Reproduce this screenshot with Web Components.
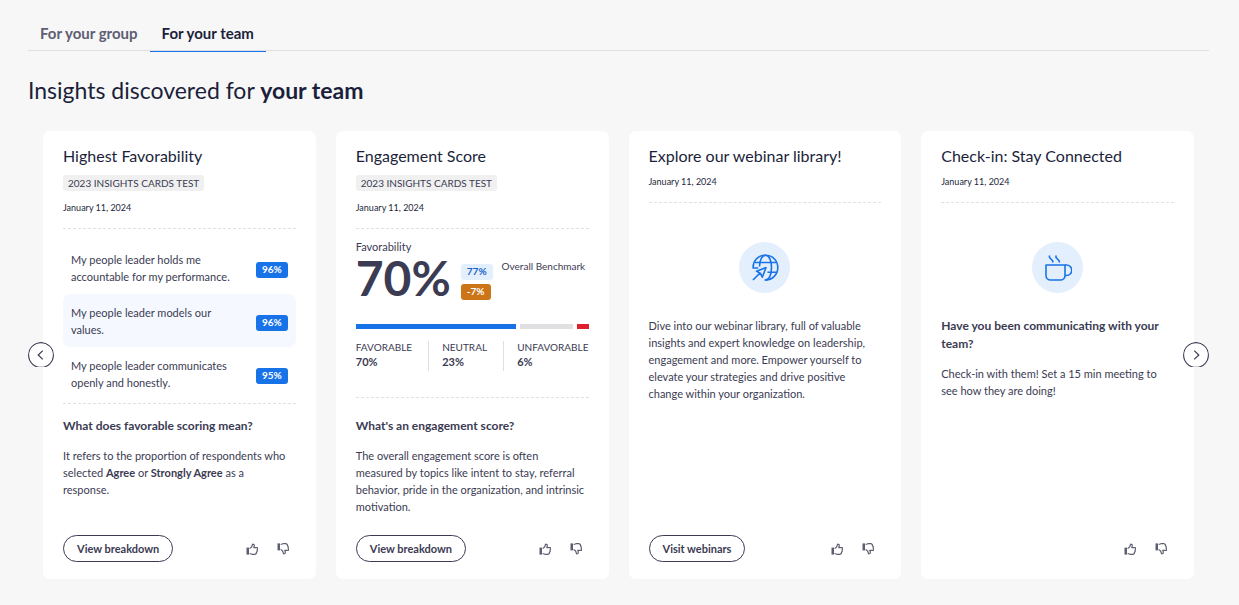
<!DOCTYPE html>
<html lang="en">
<head>
  <meta charset="utf-8">
  <meta name="viewport" content="width=device-width, initial-scale=1">
  <title>Insights</title>
  <style>
    :root {
      --ink: #1c1f3b;
      --text: #3b3b53;
      --muted: #5e5e72;
      --blue: #1973e8;
      --blue-soft: #e3effc;
      --line: #e0e0e3;
    }
    body {
      margin: 0;
      padding: 19px 30px 25px 28px;
      background: #f7f7f7;
      color: var(--text);
      font: 11px/17px Lato, "Open Sans", sans-serif;
    }
    h1 {
      margin: 24px 0 26px;
      color: var(--ink);
      font-size: 23px;
      font-weight: 400;
      line-height: 30px;
    }
  </style>
</head>
<body>
  <insight-tabs></insight-tabs>
  <h1>Insights discovered for <strong>your team</strong></h1>

  <insight-carousel>
    <insight-card heading="Highest Favorability" tag="2023 INSIGHTS CARDS TEST" date="January 11, 2024" action="View breakdown">
      <score-list>
        <score-row score="96%">My people leader holds me accountable for my performance.</score-row>
        <score-row score="96%" active>My people leader models our values.</score-row>
        <score-row score="95%">My people leader communicates openly and honestly.</score-row>
      </score-list>
      <info-text heading="What does favorable scoring mean?">
        It refers to the proportion of respondents who selected <strong>Agree</strong> or <strong>Strongly Agree</strong> as a response.
      </info-text>
    </insight-card>

    <insight-card heading="Engagement Score" tag="2023 INSIGHTS CARDS TEST" date="January 11, 2024" action="View breakdown">
      <engagement-score></engagement-score>
      <info-text heading="What's an engagement score?">
        The overall engagement score is often measured by topics like intent to stay, referral behavior, pride in the organization, and intrinsic motivation.
      </info-text>
    </insight-card>

    <insight-card heading="Explore our webinar library!" date="January 11, 2024" action="Visit webinars">
      <round-icon name="globe"></round-icon>
      <info-text>
        Dive into our webinar library, full of valuable insights and expert knowledge on leadership, engagement and more. Empower yourself to elevate your strategies and drive positive change within your organization.
      </info-text>
    </insight-card>

    <insight-card heading="Check-in: Stay Connected" date="January 11, 2024">
      <round-icon name="cup"></round-icon>
      <info-text heading="Have you been communicating with your team?">
        Check-in with them! Set a 15 min meeting to see how they are doing!
      </info-text>
    </insight-card>
  </insight-carousel>

  <script>
    class InsightTabs extends HTMLElement {
      constructor() {
        super();
        this.attachShadow({ mode: 'open' });
      }

      connectedCallback() {
        this.shadowRoot.innerHTML = `
          <style>
            :host { display: block; }
            div {
              display: flex;
              border-bottom: 1px solid var(--line);
            }
            button {
              margin: 0 0 -2px;
              padding: 0 12px 4px;
              height: 33px;
              border: 0;
              border-bottom: 1px solid transparent;
              background: none;
              color: var(--muted);
              font: inherit;
              font-size: 15px;
              font-weight: 700;
              cursor: pointer;
            }
            button[aria-selected="true"] {
              border-color: var(--blue);
              color: var(--ink);
            }
          </style>
          <div role="tablist">
            <button role="tab" aria-selected="false">For your group</button>
            <button role="tab" aria-selected="true">For your team</button>
          </div>
        `;
        const tabs = this.shadowRoot.querySelectorAll('button');
        tabs.forEach((tab) => {
          tab.addEventListener('click', () => {
            tabs.forEach((t) => t.setAttribute('aria-selected', t === tab));
          });
        });
      }
    }

    class InsightCarousel extends HTMLElement {
      constructor() {
        super();
        this.attachShadow({ mode: 'open' });
        this.shadowRoot.innerHTML = `
          <style>
            :host {
              display: block;
              position: relative;
            }
            .cards {
              display: grid;
              grid-template-columns: repeat(4, minmax(0, 1fr));
              gap: 20px;
              margin: 0 15px;
            }
            /* arrows lie over the outer edges of the first and last card */
            button {
              position: absolute;
              top: 50%;
              width: 26px;
              height: 25px;
              margin-top: -13px;
              padding: 0;
              border: 0;
              border-radius: 13px 13px 0 0;
              background: none;
              overflow: hidden;
              cursor: pointer;
            }
            .prev { left: 0; }
            .next { right: 0; }
            svg { display: block; }
          </style>
          <div class="cards"><slot></slot></div>
          <button class="prev" aria-label="Previous">
            <svg width="26" height="26" viewBox="0 0 26 26" fill="#fff" stroke="#3b3b53">
              <circle cx="13" cy="13" r="12.4" stroke-width="1.1"/>
              <path d="M14.800 8.600 10.200 13l4.600 4.400" fill="none" stroke-width="1.2"/>
            </svg>
          </button>
          <button class="next" aria-label="Next">
            <svg width="26" height="26" viewBox="0 0 26 26" fill="#fff" stroke="#3b3b53">
              <circle cx="13" cy="13" r="12.4" stroke-width="1.1"/>
              <path d="m11.200 8.600 4.600 4.400-4.600 4.400" fill="none" stroke-width="1.2"/>
            </svg>
          </button>
        `;
      }
    }

    class InsightCard extends HTMLElement {
      constructor() {
        super();
        this.attachShadow({ mode: 'open' });
      }

      connectedCallback() {
        const tag = this.getAttribute('tag');
        const action = this.getAttribute('action');
        this.shadowRoot.innerHTML = `
          <style>
            :host {
              display: flex;
              flex-direction: column;
              padding: 15px 20px 17px;
              border-radius: 7px;
              background: #fff;
            }
            header {
              padding-bottom: 13px;
              border-bottom: 1px dashed var(--line);
            }
            h2 {
              margin: 0 0 9px;
              color: var(--ink);
              font-size: 16px;
              font-weight: 400;
              line-height: 20px;
            }
            .tag {
              display: table;
              margin-bottom: 10px;
              padding: 0 5px;
              border-radius: 3px;
              background: #f0f0f0;
              font-size: 10px;
              line-height: 16px;
            }
            time {
              display: block;
              color: var(--ink);
              font-size: 9px;
              line-height: 14px;
            }
            footer {
              display: flex;
              align-items: center;
              min-height: 27px;
              margin-top: auto;
              padding-top: 20px;
            }
            .action {
              height: 27px;
              padding: 0 13px;
              border: 1px solid var(--text);
              border-radius: 14px;
              background: #fff;
              color: var(--text);
              font: inherit;
              font-weight: 700;
              cursor: pointer;
            }
            feedback-buttons { margin-left: auto; }
          </style>
          <header>
            <h2>${this.getAttribute('heading')}</h2>
            ${tag ? `<span class="tag">${tag}</span>` : ''}
            <time datetime="2024-01-11">${this.getAttribute('date')}</time>
          </header>
          <slot></slot>
          <footer>
            ${action ? `<button class="action">${action}</button>` : ''}
            <feedback-buttons></feedback-buttons>
          </footer>
        `;
      }
    }

    class FeedbackButtons extends HTMLElement {
      constructor() {
        super();
        this.attachShadow({ mode: 'open' });
        const thumb = `
          <rect x="0.5" y="4.6" width="2.5" height="7" fill="#5e5e72"/>
          <path d="M3.6 5.6 5.6 4 6.6 1.2 8.1 1.5 8.3 3 7.8 4.6H11.3L11.8 5.6 11.1 7 11.2 8.5 10.4 9.4 10.3 10.6 9.2 11.3H6L3.6 10.5"
            fill="none" stroke="#5e5e72" stroke-width="1.2" stroke-linejoin="round"/>
        `;
        this.shadowRoot.innerHTML = `
          <style>
            :host {
              display: flex;
              gap: 5px;
            }
            button {
              display: grid;
              place-items: center;
              width: 26px;
              height: 26px;
              padding: 0;
              border: 0;
              background: none;
              cursor: pointer;
            }
          </style>
          <button aria-label="Helpful">
            <svg width="12" height="12" viewBox="0 0 12 12">${thumb}</svg>
          </button>
          <button aria-label="Not helpful">
            <svg width="12" height="12" viewBox="0 0 12 12"><g transform="matrix(1 0 0 -1 0 12)">${thumb}</g></svg>
          </button>
        `;
      }
    }

    class ScoreBadge extends HTMLElement {
      constructor() {
        super();
        this.attachShadow({ mode: 'open' });
        this.shadowRoot.innerHTML = `
          <style>
            :host {
              display: block;
              width: max-content;
              padding: 0 6px 1px;
              border-radius: 3px;
              background: var(--blue);
              color: #fff;
              font-size: 10px;
              font-weight: 700;
              line-height: 15px;
            }
            :host([kind="soft"]) {
              background: var(--blue-soft);
              color: #1864c8;
            }
            :host([kind="low"]) { background: #cb7418; }
          </style>
          <slot></slot>
        `;
      }
    }

    class ScoreList extends HTMLElement {
      constructor() {
        super();
        this.attachShadow({ mode: 'open' });
        this.shadowRoot.innerHTML = `
          <style>
            :host {
              display: block;
              padding: 12px 0 3px;
              border-bottom: 1px dashed var(--line);
            }
          </style>
          <slot></slot>
        `;
      }
    }

    class ScoreRow extends HTMLElement {
      constructor() {
        super();
        this.attachShadow({ mode: 'open' });
      }

      connectedCallback() {
        this.shadowRoot.innerHTML = `
          <style>
            :host {
              display: flex;
              align-items: center;
              justify-content: space-between;
              gap: 20px;
              padding: 10px 8px 9px;
              border-radius: 7px;
            }
            :host([active]) { background: #f5f9ff; }
            score-badge {
              flex: none;
              margin-top: 4px;
            }
          </style>
          <span><slot></slot></span>
          <score-badge>${this.getAttribute('score')}</score-badge>
        `;
      }
    }

    class InfoText extends HTMLElement {
      constructor() {
        super();
        this.attachShadow({ mode: 'open' });
      }

      connectedCallback() {
        const heading = this.getAttribute('heading');
        this.shadowRoot.innerHTML = `
          <style>
            :host {
              display: block;
              margin-top: 13px;
              padding-right: 4px;
            }
            h3 {
              margin: 0 0 12px;
              font-size: 12px;
              font-weight: 700;
              line-height: 18px;
            }
            p { margin: 0; }
          </style>
          ${heading ? `<h3>${heading}</h3>` : ''}
          <p><slot></slot></p>
        `;
      }
    }

    class EngagementScore extends HTMLElement {
      constructor() {
        super();
        this.attachShadow({ mode: 'open' });
        this.shadowRoot.innerHTML = `
          <style>
            :host {
              display: block;
              margin-bottom: 6px;
              padding: 10px 0 26px;
              border-bottom: 1px dashed var(--line);
            }
            .label { line-height: 16px; }
            .summary {
              display: flex;
              align-items: center;
            }
            .total {
              font-size: 48px;
              font-weight: 700;
              line-height: 46px;
            }
            .badges {
              display: grid;
              gap: 4px;
              margin: 8px 9px 0 10px;
            }
            .benchmark {
              align-self: flex-start;
              margin-top: 4px;
              font-size: 10px;
              line-height: 14px;
            }
            .bar {
              display: grid;
              grid-template-columns: 70fr 23fr 5fr;
              gap: 4px;
              height: 5px;
              margin: 23px 0 12px;
            }
            .bar i:nth-child(1) { background: var(--blue); }
            .bar i:nth-child(2) { background: var(--line); }
            .bar i:nth-child(3) { background: #df1f2d; }
            dl {
              display: flex;
              justify-content: space-between;
              margin: 0;
            }
            dl div + div {
              padding-left: 13px;
              border-left: 1px solid var(--line);
            }
            dt {
              font-size: 10px;
              line-height: 12px;
            }
            dd {
              margin: 0;
              font-weight: 700;
              line-height: 18px;
            }
          </style>
          <div class="label">Favorability</div>
          <div class="summary">
            <div class="total">70%</div>
            <div class="badges">
              <score-badge kind="soft">77%</score-badge>
              <score-badge kind="low">-7%</score-badge>
            </div>
            <div class="benchmark">Overall Benchmark</div>
          </div>
          <div class="bar"><i></i><i></i><i></i></div>
          <dl>
            <div><dt>FAVORABLE</dt><dd>70%</dd></div>
            <div><dt>NEUTRAL</dt><dd>23%</dd></div>
            <div><dt>UNFAVORABLE</dt><dd>6%</dd></div>
          </dl>
        `;
      }
    }

    const ICONS = {
      globe: `
        <path d="M2.2 14.5C1.5 7 7 1.2 14.5 1.2c7 0 12.3 5.3 12.3 12.3S21.5 26 14.5 26h-1"/>
        <path d="M4 8.5h21M16.5 18.3h9.2M2.2 14h5"/>
        <path d="M8.5 12.5C8.7 6 11 1.2 14.5 1.2c3.8 0 6 5.5 6 12.3S18.3 26 14.5 26"/>
        <path d="m2 26 7-7M5.5 17.2l9.5-3.7-3.7 9.6-2-4z"/>
      `,
      cup: `
        <path d="M2 11h19v10.5a4.5 4.5 0 0 1-4.5 4.5h-10A4.5 4.5 0 0 1 2 21.5z"/>
        <path d="M21 11h1.500a5 5 0 0 1 0 10.500H21"/>
        <path d="M5.500 1.500v2l3.300 3.500v1.500M12 1.500v2l3.300 3.500v1.500"/>
      `
    };

    class RoundIcon extends HTMLElement {
      constructor() {
        super();
        this.attachShadow({ mode: 'open' });
      }

      connectedCallback() {
        this.shadowRoot.innerHTML = `
          <style>
            :host {
              display: grid;
              place-items: center;
              width: 51px;
              height: 51px;
              margin: 39px auto 11px;
              border-radius: 50%;
              background: var(--blue-soft);
            }
          </style>
          <svg width="28" height="28" viewBox="0 0 28 28" fill="none" stroke="#1973e8" stroke-width="1.6" stroke-linejoin="round">
            ${ICONS[this.getAttribute('name')]}
          </svg>
        `;
      }
    }

    customElements.define('score-badge', ScoreBadge);
    customElements.define('feedback-buttons', FeedbackButtons);
    customElements.define('insight-tabs', InsightTabs);
    customElements.define('insight-carousel', InsightCarousel);
    customElements.define('insight-card', InsightCard);
    customElements.define('score-list', ScoreList);
    customElements.define('score-row', ScoreRow);
    customElements.define('info-text', InfoText);
    customElements.define('engagement-score', EngagementScore);
    customElements.define('round-icon', RoundIcon);
  </script>
</body>
</html>
